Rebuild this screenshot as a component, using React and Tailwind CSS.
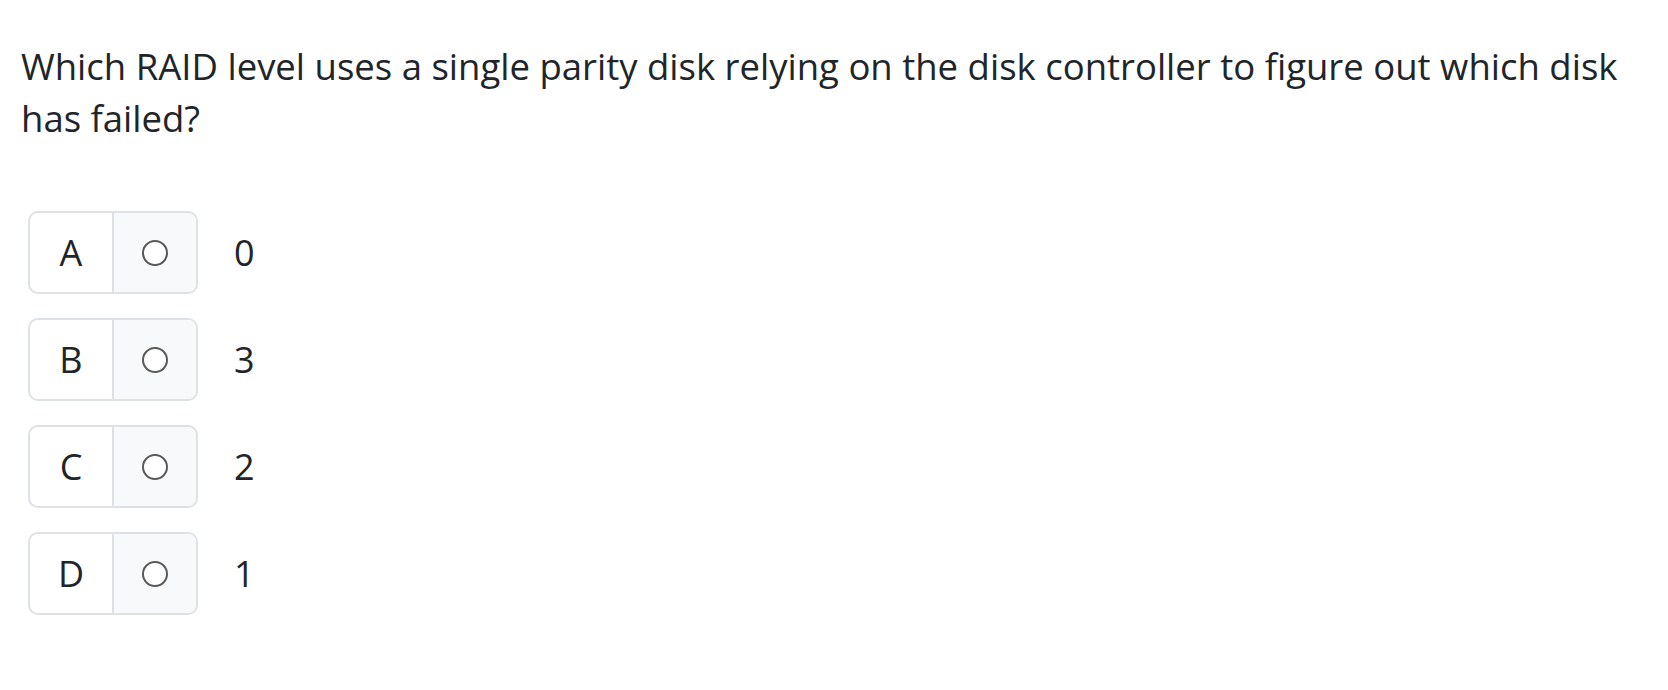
const options = [
  { letter: "A", value: "0" },
  { letter: "B", value: "3" },
  { letter: "C", value: "2" },
  { letter: "D", value: "1" },
];

export default function App() {
  return (
    <div className="min-h-[690px] bg-white px-[21px] pt-[40px] text-[#212529]" style={{ fontFamily: '"Open Sans", "Noto Sans", sans-serif' }}>
      <p className="max-w-[1620px] text-[36.5px] leading-[52px]">
        Which RAID level uses a single parity disk relying on the disk controller to figure out which disk has failed?
      </p>

      <div className="mt-[67px] flex flex-col gap-[24px]">
        {options.map((opt) => (
          <div key={opt.letter} className="flex items-center">
            <div className="ml-[7px] flex h-[83px] w-[170px] overflow-hidden rounded-[10px] border-2 border-[#dee2e6]">
              <div className="flex w-[82px] items-center justify-center text-[36px]">{opt.letter}</div>
              <div className="flex flex-1 items-center justify-center border-l-2 border-[#dee2e6] bg-[#f8f9fa]">
                <span className="block h-[26px] w-[26px] rounded-full border-2 border-[#595959] bg-white" />
              </div>
            </div>
            <div className="ml-[36px] text-[36px]">{opt.value}</div>
          </div>
        ))}
      </div>
    </div>
  );
}
